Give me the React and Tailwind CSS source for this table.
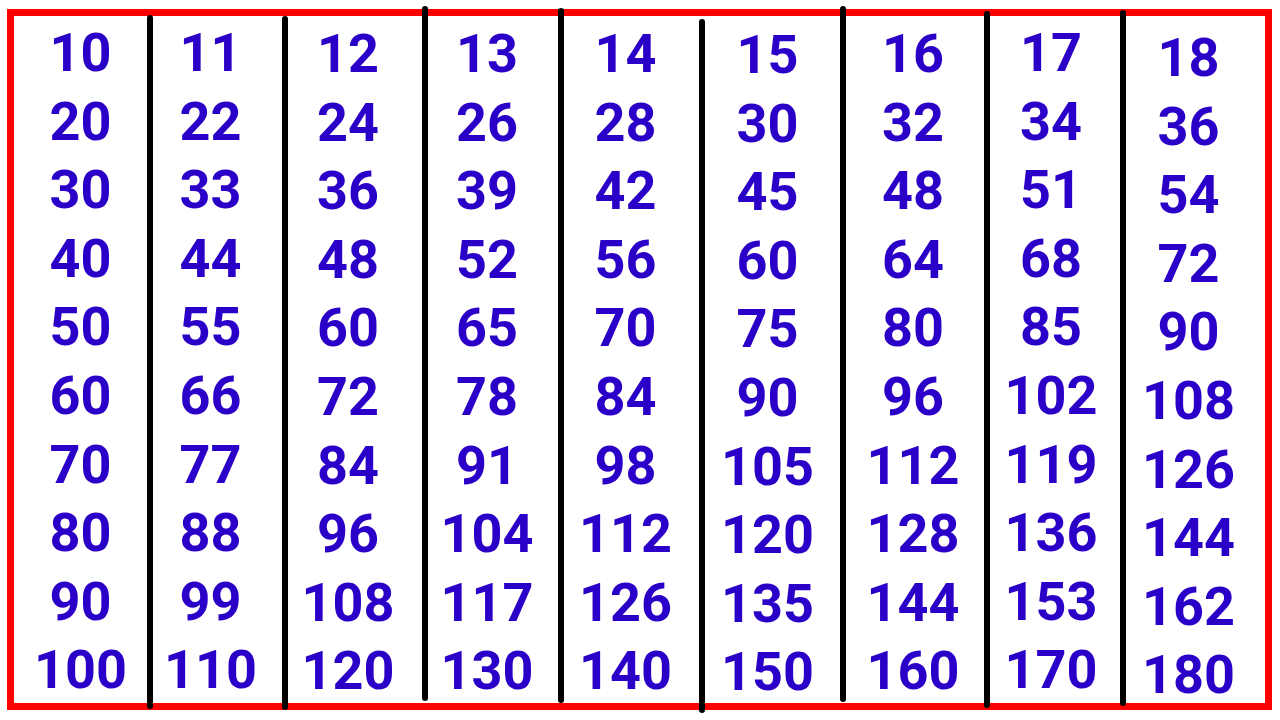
const columns = [
  { start: 10, width: "w-[133px]", pad: "pt-[3px] pr-[0px]" },
  { start: 11, width: "w-[129px]", pad: "pt-[3px] pr-[14px]" },
  { start: 12, width: "w-[134px]", pad: "pt-[4px] pr-[14px]" },
  { start: 13, width: "w-[130px]", pad: "pt-[4px] pr-[12px]" },
  { start: 14, width: "w-[135px]", pad: "pt-[4px] pr-[12px]" },
  { start: 15, width: "w-[135px]", pad: "pt-[5px] pr-[10px]" },
  { start: 16, width: "w-[138px]", pad: "pt-[4px] pr-[4px]" },
  { start: 17, width: "w-[130px]", pad: "pt-[3px] pr-[8px]" },
  { start: 18, width: "w-[139px]", pad: "pt-[8px] pr-[14px]" },
]

// divider lines are hand drawn, so each one runs a bit past (or short of) the frame
const dividers = [
  "-mt-[1px] -mb-[6px]",
  "mt-0 -mb-[7px]",
  "-mt-[10px] mb-[2px]",
  "-mt-[8px] mb-0",
  "mt-[3px] -mb-[10px]",
  "-mt-[10px] mb-[1px]",
  "-mt-[5px] -mb-[5px]",
  "-mt-[6px] -mb-[3px]",
]

function Column({ start, width, pad }) {
  const rows = Array.from({ length: 10 }, (_, i) => start * (i + 1))
  return (
    <div className={`${width} ${pad} flex flex-col items-center shrink-0`}>
      {rows.map((n) => (
        <div key={n} className="h-[68.6px] leading-[68.6px] text-[54px] font-bold text-[#2a00c8]">
          {n}
        </div>
      ))}
    </div>
  )
}

export default function App() {
  return (
    <div className="w-[1280px] h-[720px] bg-white overflow-hidden pt-[9px] pl-[7px]" style={{ fontFamily: "Roboto, 'Liberation Sans', sans-serif" }}>
      <div className="w-[1265px] h-[701px] border-[7px] border-[#ff0000] flex items-stretch">
        {columns.map((col, i) => (
          <div key={col.start} className="contents">
            {i > 0 && <div className={`w-[6px] shrink-0 bg-black rounded-full ${dividers[i - 1]}`} />}
            <Column {...col} />
          </div>
        ))}
      </div>
    </div>
  )
}
